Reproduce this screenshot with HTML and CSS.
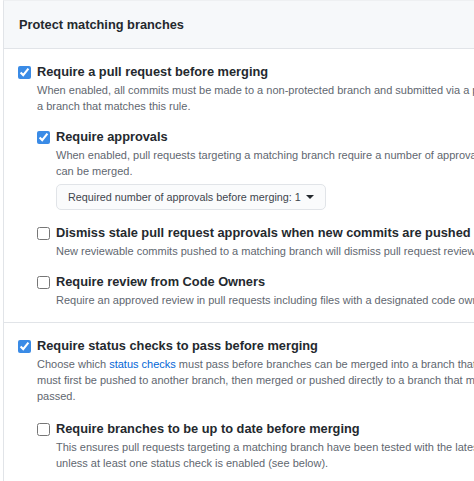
FILE: index.html
```html
<!DOCTYPE html>
<html lang="en">
<head>
<meta charset="utf-8">
<title>Protect matching branches</title>
<link rel="stylesheet" href="styles.css">
</head>
<body>
<div class="box">
  <div class="box-header">Protect matching branches</div>

  <div class="section">
    <div class="opt">
      <input class="cb" type="checkbox" checked>
      <div class="opt-body">
        <div class="opt-title">Require a pull request before merging</div>
        <div class="opt-desc">When enabled, all commits must be made to a non-protected branch and submitted via a pull request before they can be merged into<br>a branch that matches this rule.</div>

        <div class="opt sub">
          <input class="cb" type="checkbox" checked>
          <div class="opt-body">
            <div class="opt-title">Require approvals</div>
            <div class="opt-desc">When enabled, pull requests targeting a matching branch require a number of approvals and no changes requested before they<br>can be merged.</div>
            <button class="select" type="button">Required number of approvals before merging: 1 <span class="caret"></span></button>
          </div>
        </div>

        <div class="opt sub">
          <input class="cb" type="checkbox">
          <div class="opt-body">
            <div class="opt-title">Dismiss stale pull request approvals when new commits are pushed</div>
            <div class="opt-desc">New reviewable commits pushed to a matching branch will dismiss pull request review approvals.</div>
          </div>
        </div>

        <div class="opt sub">
          <input class="cb" type="checkbox">
          <div class="opt-body">
            <div class="opt-title">Require review from Code Owners</div>
            <div class="opt-desc">Require an approved review in pull requests including files with a designated code owner.</div>
          </div>
        </div>
      </div>
    </div>
  </div>

  <div class="section">
    <div class="opt">
      <input class="cb" type="checkbox" checked>
      <div class="opt-body">
        <div class="opt-title">Require status checks to pass before merging</div>
        <div class="opt-desc">Choose which <a class="link" href="#">status checks</a> must pass before branches can be merged into a branch that matches this rule. When enabled, commits<br>must first be pushed to another branch, then merged or pushed directly to a branch that matches this rule after status checks have<br>passed.</div>

        <div class="opt sub sub-wide">
          <input class="cb" type="checkbox">
          <div class="opt-body">
            <div class="opt-title">Require branches to be up to date before merging</div>
            <div class="opt-desc">This ensures pull requests targeting a matching branch have been tested with the latest code. This setting will not take effect<br>unless at least one status check is enabled (see below).</div>
          </div>
        </div>
      </div>
    </div>
  </div>
</div>
</body>
</html>
```

FILE: styles.css
```css
html, body {
  margin: 0;
  padding: 0;
  background: #ffffff;
  overflow: hidden;
}

body {
  font-family: "Liberation Sans", Arial, Helvetica, sans-serif;
  color: #24292e;
}

.box {
  margin-left: 3px;
  width: 900px;
  border-left: 1px solid #e1e4e8;
  border-top: 1px solid #eef0f2;
}

.box-header {
  height: 47px;
  display: flex;
  align-items: center;
  padding: 0 15px;
  background: #f6f8fa;
  border-bottom: 1px solid #e1e4e8;
  font-size: 12.8px;
  font-weight: bold;
}

.section {
  padding: 13px 0 14px 14px;
  border-bottom: 1px solid #e1e4e8;
}

.opt {
  display: grid;
  grid-template-columns: 14px 1fr;
  column-gap: 5px;
  align-items: start;
}

.opt.sub {
  margin-top: 13px;
}

.opt.sub-wide {
  margin-top: 15px;
}

.cb {
  width: 13px;
  height: 13px;
  margin: 4px 0 0 0;
  accent-color: #3a8be6;
}

.opt-title {
  font-size: 12.8px;
  font-weight: bold;
  line-height: 20px;
  white-space: nowrap;
}

.opt-desc {
  font-size: 11px;
  line-height: 16px;
  color: #5f6770;
  white-space: nowrap;
}

.link {
  color: #0366d6;
  text-decoration: none;
}

.select {
  display: flex;
  align-items: center;
  gap: 5px;
  margin-top: 5px;
  height: 26px;
  padding: 0 11px;
  background: #fafbfc;
  border: 1px solid #e1e4e8;
  border-radius: 5px;
  font-family: "Liberation Sans", Arial, Helvetica, sans-serif;
  font-size: 10.8px;
  color: #3f464e;
}

.caret {
  width: 0;
  height: 0;
  border-left: 4px solid transparent;
  border-right: 4px solid transparent;
  border-top: 4px solid #24292e;
}
```
